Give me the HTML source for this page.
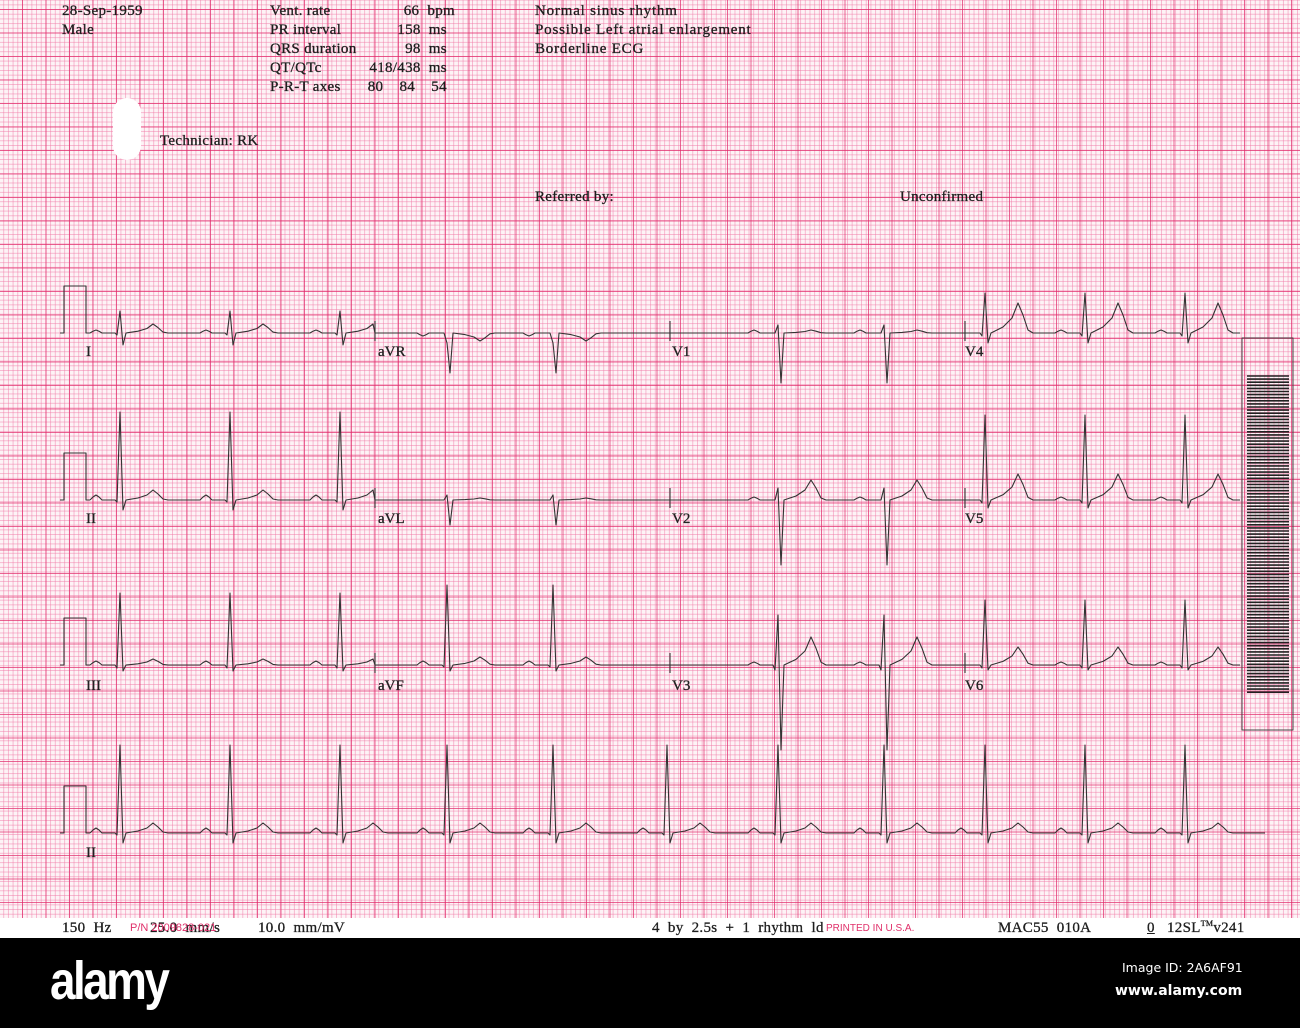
<!DOCTYPE html>
<html><head><meta charset="utf-8">
<style>
html,body{margin:0;padding:0;}
body{width:1300px;height:1028px;position:relative;overflow:hidden;background:#000;font-family:"Liberation Serif",serif;}
#paper{position:absolute;left:0;top:0;width:1300px;height:918px;background-color:#fdf3f6;
background-image:
linear-gradient(90deg,rgba(225,40,105,.7) 1.2px,transparent 1.2px),
linear-gradient(0deg,rgba(225,40,105,.7) 1.2px,transparent 1.2px),
linear-gradient(90deg,rgba(240,120,165,.5) 1px,transparent 1px),
linear-gradient(0deg,rgba(240,120,165,.5) 1px,transparent 1px);
background-size:23.5px 23.5px,23.5px 23.5px,4.7px 4.7px,4.7px 4.7px;
background-position:22px 10px,22px 10px,22px 10px,22px 10px;}
#strip{position:absolute;left:0;top:918px;width:1300px;height:20px;background:#fff;}
.t{position:absolute;color:#1e1e1e;font-size:15px;line-height:19px;white-space:pre;letter-spacing:0.3px;-webkit-text-stroke:0.3px #1e1e1e;}
.r{text-align:right;}
.lab{position:absolute;color:#222;font-size:15px;-webkit-text-stroke:0.3px #222;}
svg{position:absolute;left:0;top:0;}
</style></head><body>
<div id="paper"></div>
<div id="strip"></div>
<div class="t" style="left:62px;top:2px">28-Sep-1959
Male</div>
<div class="t" style="left:270px;top:2px">Vent. rate
PR interval
QRS duration
QT/QTc
P-R-T axes</div>
<div class="t r" style="left:300px;top:2px;width:155px">66  bpm
158  ms  
98  ms  
418/438  ms  
80    84    54  </div>
<div class="t" style="left:535px;top:2px;letter-spacing:0.8px">Normal sinus rhythm
Possible Left atrial enlargement
Borderline ECG</div>
<div style="position:absolute;left:113px;top:98px;width:28px;height:62px;background:#fff;border-radius:14px"></div>
<div class="t" style="left:160px;top:132px">Technician: RK</div>
<div class="t" style="left:535px;top:188px">Referred by:</div>
<div class="t" style="left:900px;top:188px">Unconfirmed</div>

<div class="lab" style="left:86px;top:344px">I</div>
<div class="lab" style="left:378px;top:344px">aVR</div>
<div class="lab" style="left:672px;top:344px">V1</div>
<div class="lab" style="left:965px;top:344px">V4</div>
<div class="lab" style="left:86px;top:511px">II</div>
<div class="lab" style="left:378px;top:511px">aVL</div>
<div class="lab" style="left:672px;top:511px">V2</div>
<div class="lab" style="left:965px;top:511px">V5</div>
<div class="lab" style="left:86px;top:678px">III</div>
<div class="lab" style="left:378px;top:678px">aVF</div>
<div class="lab" style="left:672px;top:678px">V3</div>
<div class="lab" style="left:965px;top:678px">V6</div>
<div class="lab" style="left:86px;top:845px">II</div>

<div class="t" style="left:62px;top:919px">150  Hz</div>
<div class="t" style="left:150px;top:919px">25.0  mm/s</div>
<div style="position:absolute;left:130px;top:922px;color:#e0306a;font-family:'Liberation Sans',sans-serif;font-size:11px">P/N 2009828-021</div>
<div class="t" style="left:258px;top:919px">10.0  mm/mV</div>
<div class="t" style="left:652px;top:919px">4  by  2.5s  +  1  rhythm  ld</div>
<div style="position:absolute;left:826px;top:923px;color:#e0306a;font-family:'Liberation Sans',sans-serif;font-size:10px">PRINTED IN U.S.A.</div>
<div class="t" style="left:998px;top:919px">MAC55  010A</div>
<div class="t" style="left:1147px;top:919px;text-decoration:underline">0</div>
<div class="t" style="left:1167px;top:919px">12SL<span style="font-size:8px;position:relative;top:-6px">TM</span>v241</div>

<div style="position:absolute;left:50px;top:950px;color:#fff;font-family:'Liberation Sans',sans-serif;font-weight:bold;font-size:54px;letter-spacing:-3px;transform:scaleX(0.85);transform-origin:left">alamy</div>
<div style="position:absolute;left:1122px;top:960px;color:#fff;font-family:'DejaVu Sans',sans-serif;font-size:12.5px">Image ID: 2A6AF91</div>
<div style="position:absolute;left:1115px;top:983px;color:#fff;font-family:'DejaVu Sans',sans-serif;font-weight:bold;font-size:14px">www.alamy.com</div>

<svg id="ecg" width="1300" height="938" viewBox="0 0 1300 938"></svg>
<script>
var NS="http://www.w3.org/2000/svg",svg=document.getElementById('ecg');
function path(d,w,c){var p=document.createElementNS(NS,'path');p.setAttribute('d',d);p.setAttribute('fill','none');p.setAttribute('stroke',c||'#333');p.setAttribute('stroke-width',w||1.1);p.setAttribute('stroke-linejoin','round');svg.appendChild(p);}
var beats=[120,230,340,447,553,667,778,884,985,1085,1185];
function seg(x0,x1,y,L){
 var d='M'+x0+' '+y;
 for(var i=0;i<beats.length;i++){var b=beats[i];if(b<x0+14||b>x1-8)continue;
  var pts=[[b-30,0],[b-27,L.p*0.6],[b-24,L.p],[b-21,L.p*0.6],[b-18,0],[b-5,0],[b-3,-L.q],[b,L.r],[b+3,-L.s],[b+6,0],[b+18,L.t*0.2],[b+27,L.t*0.5],[b+33,L.t],[b+38,L.t*0.6],[b+43,L.t*0.1],[b+48,0]];
  pts.forEach(function(q){var xx=q[0];if(xx>x0&&xx<x1)d+=' L'+xx+' '+(y-q[1]);});
 }
 d+=' L'+x1+' '+y;path(d);
}
var rows=[333,500,665,833];
var leads=[
 [{p:3,q:2,r:22,s:12,t:9},{p:-3,q:0,r:-10,s:40,t:-8},{p:3,q:0,r:8,s:50,t:3},{p:3,q:3,r:40,s:10,t:30}],
 [{p:5,q:2,r:88,s:10,t:10},{p:0,q:0,r:5,s:25,t:2},{p:3,q:0,r:12,s:65,t:20},{p:3,q:3,r:85,s:8,t:26}],
 [{p:4,q:3,r:72,s:6,t:6},{p:4,q:2,r:80,s:6,t:8},{p:3,q:5,r:50,s:85,t:28},{p:3,q:3,r:65,s:5,t:18}]
];
var cols=[[90,375],[375,670],[670,965],[965,1240]];
for(var r=0;r<3;r++){
 var y=rows[r];
 path('M60 '+y+' L64 '+y+' L64 '+(y-47)+' L86 '+(y-47)+' L86 '+y+' L90 '+y);
 for(var c=0;c<4;c++){seg(cols[c][0],cols[c][1],y,leads[r][c]); if(c>0)path('M'+cols[c][0]+' '+(y-12)+' L'+cols[c][0]+' '+(y+8));}
}
var y=833;
path('M60 '+y+' L64 '+y+' L64 '+(y-47)+' L86 '+(y-47)+' L86 '+y+' L90 '+y);
seg(90,1265,y,{p:5,q:2,r:88,s:10,t:10});
path('M1242 338 L1293 338 L1293 730 L1242 730 Z',1,'#444');
var s='';
for(var yy=376;yy<695;yy+=3.1){s+='M1247 '+yy.toFixed(1)+' L1289 '+yy.toFixed(1)+' ';}
path(s,1.6,'#222');
</script>
</body></html>
